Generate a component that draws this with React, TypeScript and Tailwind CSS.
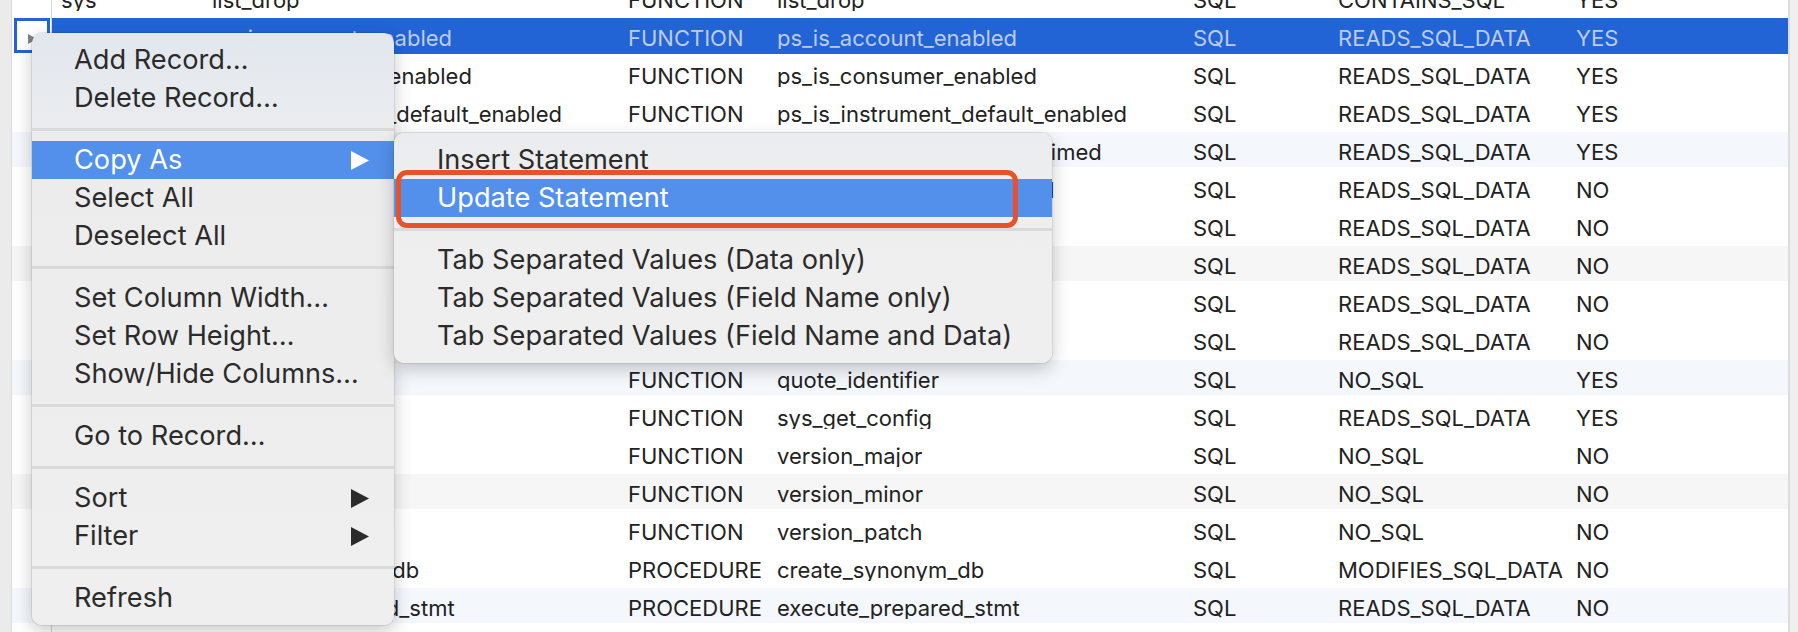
import React from "react";

const rows: string[][] = [
  ["sys", "list_drop", "FUNCTION", "list_drop", "SQL", "CONTAINS_SQL", "YES"],
  ["sys", "ps_is_account_enabled", "FUNCTION", "ps_is_account_enabled", "SQL", "READS_SQL_DATA", "YES"],
  ["sys", "ps_is_consumer_enabled", "FUNCTION", "ps_is_consumer_enabled", "SQL", "READS_SQL_DATA", "YES"],
  ["sys", "ps_is_instrument_default_enabled", "FUNCTION", "ps_is_instrument_default_enabled", "SQL", "READS_SQL_DATA", "YES"],
  ["sys", "ps_is_instrument_default_timed", "FUNCTION", "ps_is_instrument_default_timed", "SQL", "READS_SQL_DATA", "YES"],
  ["sys", "ps_is_thread_instrumented", "FUNCTION", "ps_is_thread_instrumented", "SQL", "READS_SQL_DATA", "NO"],
  ["sys", "ps_thread_account", "FUNCTION", "ps_thread_account", "SQL", "READS_SQL_DATA", "NO"],
  ["sys", "ps_thread_id", "FUNCTION", "ps_thread_id", "SQL", "READS_SQL_DATA", "NO"],
  ["sys", "ps_thread_stack", "FUNCTION", "ps_thread_stack", "SQL", "READS_SQL_DATA", "NO"],
  ["sys", "ps_thread_trx_info", "FUNCTION", "ps_thread_trx_info", "SQL", "READS_SQL_DATA", "NO"],
  ["sys", "quote_identifier", "FUNCTION", "quote_identifier", "SQL", "NO_SQL", "YES"],
  ["sys", "sys_get_config", "FUNCTION", "sys_get_config", "SQL", "READS_SQL_DATA", "YES"],
  ["sys", "version_major", "FUNCTION", "version_major", "SQL", "NO_SQL", "NO"],
  ["sys", "version_minor", "FUNCTION", "version_minor", "SQL", "NO_SQL", "NO"],
  ["sys", "version_patch", "FUNCTION", "version_patch", "SQL", "NO_SQL", "NO"],
  ["sys", "create_synonym_db", "PROCEDURE", "create_synonym_db", "SQL", "MODIFIES_SQL_DATA", "NO"],
  ["sys", "execute_prepared_stmt", "PROCEDURE", "execute_prepared_stmt", "SQL", "READS_SQL_DATA", "NO"],
  ["sys", "diagnostics", "PROCEDURE", "diagnostics", "SQL", "MODIFIES_SQL_DATA", "NO"],
];

const colW = ["w-[151px]", "w-[416px]", "w-[149px]", "w-[416px]", "w-[145px]", "w-[238px]", "flex-1"];

const BLUE = "bg-[linear-gradient(#f4f7fc_0_35px,#ffffff_35px)]";
const GRAY = "bg-[linear-gradient(#f6f6f6_0_35px,#ffffff_35px)]";
const SEL = "bg-[linear-gradient(#2264d6_0_36px,#ffffff_36px)]";

function Arrow({ color }: { color: string }) {
  return (
    <svg width="18" height="19" viewBox="0 0 18 19" className="shrink-0">
      <polygon points="0,0 18,9.5 0,19" fill={color} />
    </svg>
  );
}

function Item({ label, hl, arrow }: { label: string; hl?: boolean; arrow?: boolean }) {
  return (
    <div
      className={`flex h-[38px] items-center justify-between pl-[42px] pr-[25px] leading-none ${
        hl ? "bg-[#5290ec] text-white" : "text-[#2b2b2b]"
      }`}
    >
      <span className="whitespace-nowrap">{label}</span>
      {arrow ? <Arrow color={hl ? "#ffffff" : "#2b2b2b"} /> : null}
    </div>
  );
}

function Sep() {
  return (
    <div className="flex h-[24px] items-center">
      <div className="h-[3px] w-full bg-[#dadada]" />
    </div>
  );
}

export default function App() {
  return (
    <div className="relative flex h-[632px] w-[1798px] overflow-hidden bg-white font-['Inter','Noto_Sans',sans-serif]">
      <div className="w-[12px] shrink-0 border-r border-[#dcdcdc] bg-[#ebebeb]" />
      <div className="flex flex-1 flex-col">
        <div className="mt-[-20px] flex flex-col">
          {rows.map((r, i) => {
            const selected = i === 1;
            let bg = "bg-white";
            if (selected) bg = SEL;
            else if (i % 3 === 1) bg = ((i - 1) / 3) % 2 === 1 ? BLUE : GRAY;
            const gutterBg = selected ? "bg-white" : bg;
            return (
              <div key={i} className="flex h-[38px] shrink-0">
                <div className={`w-[40px] shrink-0 border-r border-[#d6d6d6] ${gutterBg}`}>
                  {selected ? (
                    <div className="ml-[2px] flex h-[35px] w-[36px] items-start border-[3px] border-[#2264d6] bg-white pl-[11px] pt-[13px]">
                      <svg width="9" height="10" viewBox="0 0 9 10">
                        <polygon points="0,0 9,5 0,10" fill="#808080" />
                      </svg>
                    </div>
                  ) : null}
                </div>
                <div
                  className={`flex flex-1 items-center pt-[2px] text-[22px] leading-none ${bg} ${
                    selected ? "text-[#bdcbe7]" : "text-[#222222]"
                  }`}
                >
                  {r.map((c, j) => (
                    <div key={j} className={`${colW[j]} shrink-0 overflow-hidden whitespace-nowrap pl-[9px]`}>
                      {c}
                    </div>
                  ))}
                </div>
              </div>
            );
          })}
        </div>
      </div>
      <div className="w-[10px] shrink-0 border-l-2 border-[#dcdcdc] bg-[#efefef]" />

      {/* Context menu */}
      <div className="absolute left-[32px] top-[33px] w-[362px] rounded-[10px] bg-[linear-gradient(180deg,#e2e7ee_0px,#e8ebef_70px,#ececec_110px,#efefef_100%)] py-[8px] text-[27.2px] shadow-[0_0_0_1px_rgba(0,0,0,0.08),0_6px_18px_rgba(0,0,0,0.22)]">
        <Item label="Add Record…" />
        <Item label="Delete Record…" />
        <Sep />
        <Item label="Copy As" hl arrow />
        <Item label="Select All" />
        <Item label="Deselect All" />
        <Sep />
        <Item label="Set Column Width…" />
        <Item label="Set Row Height…" />
        <Item label="Show/Hide Columns…" />
        <Sep />
        <Item label="Go to Record…" />
        <Sep />
        <Item label="Sort" arrow />
        <Item label="Filter" arrow />
        <Sep />
        <Item label="Refresh" />
      </div>

      {/* Submenu */}
      <div className="absolute left-[394px] top-[133px] w-[658px] rounded-[10px] bg-[linear-gradient(180deg,#eaecef_0px,#eeeeee_60px,#efefef_100%)] py-[8px] text-[27.2px] shadow-[0_0_0_1px_rgba(0,0,0,0.08),0_6px_18px_rgba(0,0,0,0.22)]">
        <div className="flex h-[38px] items-center pl-[43px] leading-none text-[#2b2b2b]">Insert Statement</div>
        <div className="flex h-[38px] items-center bg-[#5290ec] pl-[43px] leading-none text-white">Update Statement</div>
        <Sep />
        <div className="flex h-[38px] items-center pl-[43px] leading-none text-[#2b2b2b]">Tab Separated Values (Data only)</div>
        <div className="flex h-[38px] items-center pl-[43px] leading-none text-[#2b2b2b]">Tab Separated Values (Field Name only)</div>
        <div className="flex h-[38px] items-center pl-[43px] leading-none text-[#2b2b2b]">Tab Separated Values (Field Name and Data)</div>
      </div>

      {/* Annotation box */}
      <div className="absolute left-[396px] top-[170px] h-[58px] w-[622px] rounded-[11px] border-[5px] border-[#e8522b]" />
    </div>
  );
}
